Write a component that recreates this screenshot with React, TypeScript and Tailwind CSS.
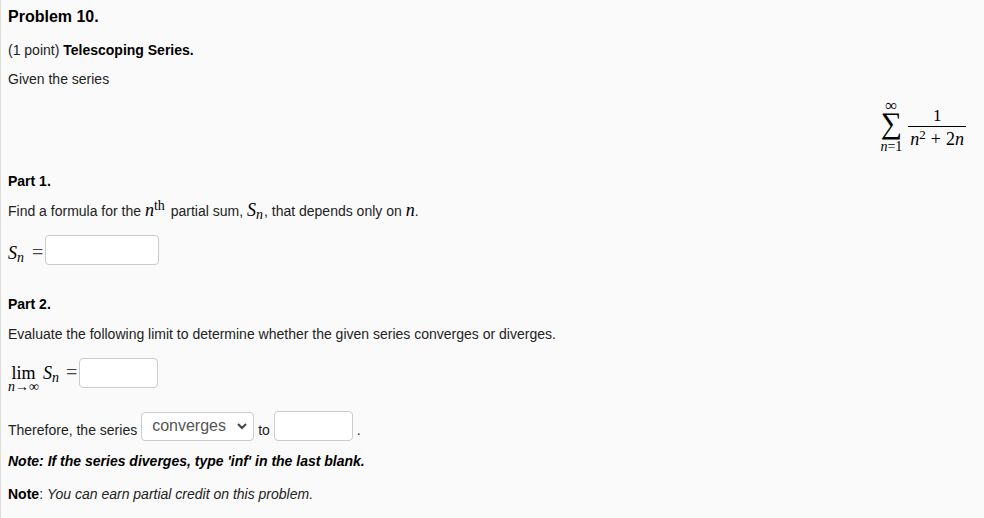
import { useState, type ReactNode } from "react";

const serif = "font-['Liberation_Serif',serif]";

function MathText({ children, className = "" }: { children: ReactNode; className?: string }) {
  return <span className={`${serif} text-[18px] leading-none text-black ${className}`}>{children}</span>;
}

function PartialSum() {
  return (
    <MathText className="italic">
      S<span className="align-[-3px] text-[14px] leading-[0px]">n</span>
    </MathText>
  );
}

function Equals() {
  return <span className={`${serif} text-[20px] leading-none text-[#444]`}>=</span>;
}

function SeriesFormula() {
  return (
    <div className={`${serif} flex items-center justify-end gap-[6px] pr-[11px] text-black`}>
      <div className="flex flex-col items-center">
        <span className="text-[17px] leading-[6px]">∞</span>
        <span className="text-[30px] leading-7">∑</span>
        <span className="mt-1 text-[14px] leading-3">
          <i>n</i>=1
        </span>
      </div>
      <div className="flex flex-col items-center text-[18px]">
        <span className="text-[17px] leading-5">1</span>
        <span className="border-t border-black px-[2px] leading-6">
          <i>n</i>
          <span className="align-[6px] text-[13px] leading-[0px]">2</span>
          <span className="px-[5px]">+</span>2<i>n</i>
        </span>
      </div>
    </div>
  );
}

function Blank({ id, label, wide = false }: { id: string; label: string; wide?: boolean }) {
  const [value, setValue] = useState("");
  return (
    <input
      id={id}
      aria-label={label}
      type="text"
      value={value}
      onChange={(e) => setValue(e.target.value)}
      className={`h-[30px] rounded border border-[#ccc] bg-white px-2 text-base text-[#555] ${wide ? "w-[114px]" : "w-[79px]"}`}
    />
  );
}

export default function App() {
  const [verdict, setVerdict] = useState("converges");
  return (
    <main className="min-h-screen border-l border-[#ddd] bg-[#fafafa] px-[7px] pt-[7px] pb-3 font-['Liberation_Sans',Arial,sans-serif] text-[14px] leading-5 text-[#222]">
      <h1 className="text-base leading-5 font-bold text-black">Problem 10.</h1>
      <p className="mt-[13px]">
        (1 point) <b className="text-black">Telescoping Series.</b>
      </p>
      <p className="mt-[9px]">Given the series</p>
      <div className="mt-[14px]">
        <SeriesFormula />
      </div>

      <section className="mt-[18px]">
        <h2 className="font-bold text-black">Part 1.</h2>
        <p className="mt-[10px]">
          Find a formula for the{" "}
          <MathText className="pr-[2px]">
            <i>n</i>
            <span className="align-[6px] text-[14px] leading-[0px]">th</span>
          </MathText>{" "}
          partial sum, <PartialSum />
          <span className="pl-px">, that</span> depends only on <MathText className="italic">n</MathText>.
        </p>
        <div className="mt-[14px] flex items-center">
          <label htmlFor="partial-sum" className="flex items-baseline gap-2 pt-1 pr-[2px]">
            <PartialSum />
            <Equals />
          </label>
          <Blank id="partial-sum" label="Partial sum formula" wide />
        </div>
      </section>

      <section className="mt-[29px]">
        <h2 className="font-bold text-black">Part 2.</h2>
        <p className="mt-[10px]">
          Evaluate the following limit to determine whether the given series converges or diverges.
        </p>
        <div className="mt-[14px] flex h-[30px] items-center">
          <label htmlFor="limit" className="flex items-baseline gap-1 pt-2 pr-[2px]">
            <span className={`${serif} flex flex-col items-center text-black`}>
              <span className="text-[18px] leading-4">lim</span>
              <span className="text-[14px] leading-3">
                <i>n</i>→∞
              </span>
            </span>
            <PartialSum />
            <span className="pl-[3px]">
              <Equals />
            </span>
          </label>
          <Blank id="limit" label="Limit of the partial sums" />
        </div>
        <div className="mt-[23px] flex items-center gap-1">
          <label htmlFor="verdict" className="pt-2">
            Therefore, the series
          </label>
          <div className="relative">
            <select
              id="verdict"
              value={verdict}
              onChange={(e) => setVerdict(e.target.value)}
              className="block h-[29px] w-[113px] appearance-none rounded border border-[#ccc] bg-white px-[10px] text-base text-[#555]"
            >
              <option value="converges">converges</option>
              <option value="diverges">diverges</option>
            </select>
            <svg viewBox="0 0 10 7" className="pointer-events-none absolute top-[11px] right-[7px] h-[7px] w-[10px]" fill="none" stroke="#444" strokeWidth="2">
              <path d="M1 1l4 4 4-4" />
            </svg>
          </div>
          <label htmlFor="value" className="pt-2">
            to
          </label>
          <Blank id="value" label="Value of the series" />
          <span className="pt-2">.</span>
        </div>
      </section>

      <p className="mt-[10px] font-bold text-black italic">
        Note: If the series diverges, type 'inf' in the last blank.
      </p>
      <p className="mt-[13px]">
        <b className="text-black">Note</b>: <i>You can earn partial credit on this problem.</i>
      </p>
    </main>
  );
}
